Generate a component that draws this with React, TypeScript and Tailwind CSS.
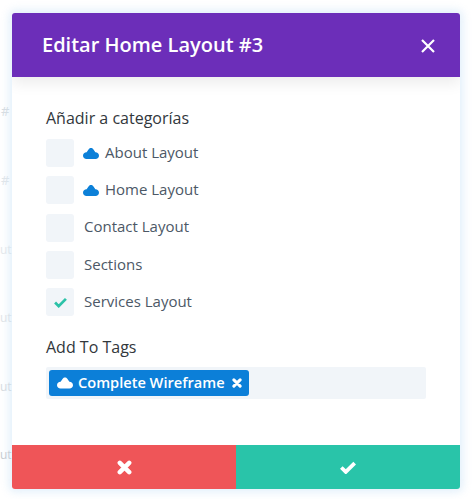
const categories = [
  { label: "About Layout", cloud: true, checked: false },
  { label: "Home Layout", cloud: true, checked: false },
  { label: "Contact Layout", cloud: false, checked: false },
  { label: "Sections", cloud: false, checked: false },
  { label: "Services Layout", cloud: false, checked: true },
];

function CloudIcon({ className }: { className: string }) {
  return (
    <svg viewBox="0 0 16 11" className={className} fill="currentColor">
      <path d="M8 0C7 0 6.300.5 5.700 1.300L3.600 4.300C1.500 4.500 0 5.800 0 7.700 0 9.600 1.500 11 3.500 11h9c2 0 3.500-1.400 3.500-3.300 0-1.900-1.500-3.200-3.600-3.400l-2.100-3C9.700.5 9 0 8 0z" />
    </svg>
  );
}

function CrossIcon({ className }: { className: string }) {
  return (
    <svg viewBox="0 0 16 16" className={className} fill="none" stroke="currentColor" strokeWidth="4.800" strokeLinecap="round">
      <path d="M3 3l10 10M13 3L3 13" />
    </svg>
  );
}

function CheckIcon({ className, width = 3.800 }: { className: string; width?: number }) {
  return (
    <svg viewBox="0 0 18 14" className={className} fill="none" stroke="currentColor" strokeWidth={width}>
      <path d="M1.500 7l5 5 10-10" />
    </svg>
  );
}

export default function App() {
  return (
    <div className="relative h-[499px] w-[474px] overflow-hidden bg-white pt-[13px] pl-[12px] font-['Open_Sans',sans-serif]">
      <div className="absolute left-[1px] top-[102px] text-[13px] text-[#d8dde2]">#</div>
      <div className="absolute left-[1px] top-[171px] text-[13px] text-[#e2e6ea]">#</div>
      <div className="absolute left-0 top-[241px] text-[12px] text-[#e6e9ec]">ut</div>
      <div className="absolute left-0 top-[309px] text-[12px] text-[#e2e5e8]">ut</div>
      <div className="absolute left-0 top-[378px] text-[12px] text-[#d8dcdf]">ut</div>
      <div className="absolute left-0 top-[446px] text-[12px] text-[#c8ccd0]">ut</div>
      <div className="relative flex h-[476px] w-[448px] flex-col overflow-hidden rounded-[3px] bg-white shadow-[0_0_9px_3px_rgba(190,220,245,0.45)]">
        <div className="flex h-[64px] shrink-0 items-center justify-between bg-[#6c2eb9] pr-[25px] pl-[30px] shadow-[0_6px_14px_rgba(0,0,0,0.08)]">
          <h1 className="text-[20px] font-semibold leading-none text-white">Editar Home Layout #3</h1>
          <svg viewBox="0 0 14 14" className="mt-[2px] size-[14px] text-white" fill="none" stroke="currentColor" strokeWidth="2.200">
            <path d="M1 1l12 12M13 1L1 13" />
          </svg>
        </div>

        <div className="flex flex-1 flex-col pt-[31px] pl-[34px]">
          <p className="h-[20px] text-[16px] leading-[20px] text-[#32373c]">Añadir a categorías</p>
          <ul className="mt-[11px] flex flex-col gap-[9.250px]">
            {categories.map((c) => (
              <li key={c.label} className="flex h-[28px] items-center">
                <span className="flex size-[28px] items-center justify-center rounded-[3px] bg-[#f1f5f9]">
                  {c.checked && <CheckIcon className="h-[11px] w-[13px] text-[#2bc2a8]" />}
                </span>
                <span className="ml-[10px] -mt-[2px] flex items-center text-[15px] font-medium text-[#4c5866]">
                  {c.cloud && <CloudIcon className="-ml-[1px] mr-[6px] mt-[3px] h-[11px] w-[16px] text-[#0c80d8]" />}
                  {c.label}
                </span>
              </li>
            ))}
          </ul>

          <p className="mt-[21px] h-[20px] text-[16px] leading-[20px] text-[#32373c]">Add To Tags</p>
          <div className="mt-[10px] flex h-[32px] w-[380px] items-center rounded-[2px] bg-[#f1f5f9] pl-[3px]">
            <span className="flex h-[26px] w-[200px] items-center rounded-[3px] bg-[#0c7fd8] pl-[8px] text-[14.600px] font-semibold text-white">
              <CloudIcon className="mr-[5px] h-[12px] w-[16px]" />
              Complete Wireframe
              <CrossIcon className="ml-[7px] size-[10px]" />
            </span>
          </div>
        </div>

        <div className="flex h-[44px] shrink-0">
          <div className="flex flex-1 items-center justify-center bg-[#ef5558]">
            <CrossIcon className="mt-[1px] size-[15px] text-white" />
          </div>
          <div className="flex flex-1 items-center justify-center bg-[#29c4a9]">
            <CheckIcon className="mt-[1px] h-[13px] w-[16px] text-white" width={4.200} />
          </div>
        </div>
      </div>
    </div>
  );
}
